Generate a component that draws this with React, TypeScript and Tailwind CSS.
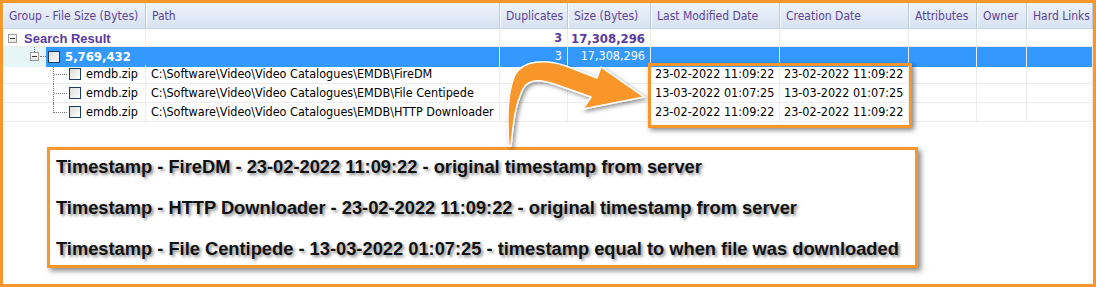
import React from 'react';

const cols = 'grid grid-cols-[143px_354px_68px_83px_129px_129px_68px_50px_66px]';
const tableFont = { fontFamily: "'DejaVu Sans Condensed', 'DejaVu Sans', sans-serif" };
const arial = { fontFamily: "'Liberation Sans', Arial, sans-serif" };

const headers = [
  'Group - File Size (Bytes)',
  'Path',
  'Duplicates',
  'Size (Bytes)',
  'Last Modified Date',
  'Creation Date',
  'Attributes',
  'Owner',
  'Hard Links',
];

const files = [
  { path: 'C:\\Software\\Video\\Video Catalogues\\EMDB\\FireDM', modified: '23-02-2022 11:09:22', created: '23-02-2022 11:09:22' },
  { path: 'C:\\Software\\Video\\Video Catalogues\\EMDB\\File Centipede', modified: '13-03-2022 01:07:25', created: '13-03-2022 01:07:25' },
  { path: 'C:\\Software\\Video\\Video Catalogues\\EMDB\\HTTP Downloader', modified: '23-02-2022 11:09:22', created: '23-02-2022 11:09:22' },
];

const notes = [
  'Timestamp - FireDM - 23-02-2022 11:09:22 - original timestamp from server',
  'Timestamp - HTTP Downloader - 23-02-2022 11:09:22 - original timestamp from server',
  'Timestamp - File Centipede - 13-03-2022 01:07:25 - timestamp equal to when file was downloaded',
];

const MinusBox = () => (
  <span className="flex h-[9px] w-[9px] items-center justify-center border border-[#9a9a9a] bg-gradient-to-b from-white to-[#e4e4e4]">
    <span className="h-px w-[5px] bg-[#3a3a3a]" />
  </span>
);

const CheckBox = () => (
  <span className="block h-[12px] w-[12px] border border-[#1d3f66] bg-gradient-to-br from-[#dcdcdc] to-white" />
);

const Cell: React.FC<{ className?: string; children?: React.ReactNode }> = ({ className = '', children }) => (
  <div className={`flex h-full items-center border-r border-[#ececec] px-[5px] ${className}`}>{children}</div>
);

const App: React.FC = () => {
  return (
    <div className="relative h-[287px] w-[1096px] overflow-hidden border-[3px] border-[#f8962c] bg-white">
      <div style={tableFont} className="text-[12.5px] text-black">
        {/* header */}
        <div className={`${cols} h-[26px] border-b border-[#c6d3e8] bg-gradient-to-b from-[#eef3fb] to-[#d7e2f2] text-[12px] text-[#5b4397]`}>
          {headers.map((h) => (
            <div key={h} className="flex items-center border-r border-[#b9c8df] px-[6px] shadow-[inset_1px_0_0_#ffffff] whitespace-nowrap">
              {h}
            </div>
          ))}
        </div>

        {/* Search Result */}
        <div className={`${cols} h-[18px] border-b border-[#ececec] font-bold text-[#5b3aa0]`}>
          <Cell className="gap-[7px] pl-[5px]">
            <MinusBox />
            <span style={arial} className="text-[13px]">Search Result</span>
          </Cell>
          <Cell />
          <Cell className="justify-end">3</Cell>
          <Cell className="justify-end text-[13px]">17,308,296</Cell>
          <Cell />
          <Cell />
          <Cell />
          <Cell />
          <Cell />
        </div>

        {/* group row, selected */}
        <div className={`${cols} h-[18px] border-b border-[#ececec] text-white`}>
          <div className="relative flex h-full items-center">
            <div className="relative flex h-full w-[43px] items-center bg-[#e6f6f8] pl-[27px]">
              <span className="absolute left-[31px] top-0 h-[5px] border-l border-dotted border-[#777]" />
              <MinusBox />
              <span className="ml-px w-[7px] border-t border-dotted border-[#777]" />
            </div>
            <div className="flex h-full flex-1 items-center gap-[5px] bg-[#3399ff] pl-[2px] text-[13px] font-bold">
              <CheckBox />
              <span>5,769,432</span>
            </div>
          </div>
          <Cell className="bg-[#3399ff]" />
          <Cell className="justify-end bg-[#3399ff]">3</Cell>
          <Cell className="justify-end bg-[#3399ff]">17,308,296</Cell>
          <Cell className="bg-[#3399ff]" />
          <Cell className="bg-[#3399ff]" />
          <Cell className="bg-[#3399ff]" />
          <Cell className="bg-[#3399ff]" />
          <Cell className="bg-[#3399ff]" />
        </div>

        {/* files */}
        {files.map((f, i) => (
          <div key={f.path} className={`${cols} h-[19px] border-b border-[#ececec]`}>
            <Cell className="relative pl-[66px]">
              <span
                className={`absolute left-[50px] top-0 border-l border-dotted border-[#777] ${i === files.length - 1 ? 'h-[10px]' : 'h-full'}`}
              />
              <span className="absolute left-[51px] top-[9px] w-[13px] border-t border-dotted border-[#777]" />
              <CheckBox />
              <span className="ml-[5px]">emdb.zip</span>
            </Cell>
            <Cell className="whitespace-nowrap">{f.path}</Cell>
            <Cell />
            <Cell />
            <Cell className="whitespace-nowrap pl-[4px]">{f.modified}</Cell>
            <Cell className="whitespace-nowrap pl-[4px]">{f.created}</Cell>
            <Cell />
            <Cell />
            <Cell />
          </div>
        ))}
      </div>

      {/* annotation */}
      <div
        style={arial}
        className="ml-[44px] mt-[25px] flex h-[121px] w-[871px] flex-col gap-[20px] border-[3px] border-[#f8962c] pl-[6px] pt-[6px] text-[18.3px] font-bold leading-[21px] text-[#111] shadow-[3px_3px_5px_rgba(0,0,0,0.45)] [text-shadow:2px_2px_3px_rgba(0,0,0,0.45)]"
      >
        {notes.map((n) => (
          <div key={n} className="whitespace-nowrap">{n}</div>
        ))}
      </div>

      {/* highlight around the dates */}
      <div className="pointer-events-none absolute left-[645px] top-[60px] h-[65px] w-[264px] border-[3px] border-[#f8962c] shadow-[2px_2px_5px_rgba(0,0,0,0.5)]" />

      {/* curved arrow */}
      <svg className="pointer-events-none absolute left-[-3px] top-[-3px]" width="1096" height="287" viewBox="0 0 1096 287">
        <defs>
          <filter id="sh" x="-20%" y="-20%" width="140%" height="140%">
            <feDropShadow dx="2" dy="2" stdDeviation="2" floodColor="#000" floodOpacity="0.45" />
          </filter>
        </defs>
        <path
          d="M 509 146 C 507 120, 507 92, 515 75 C 523 60, 545 59, 566 66 L 597 78 L 601 67 L 644 97 L 583 109 L 591 97 L 560 86 C 541 79, 529 78, 523 89 C 515 105, 513 125, 511 146 Z"
          fill="#f8962c"
          stroke="#ffffff"
          strokeWidth="1.5"
          strokeLinejoin="round"
          filter="url(#sh)"
        />
      </svg>
    </div>
  );
};

export default App;
